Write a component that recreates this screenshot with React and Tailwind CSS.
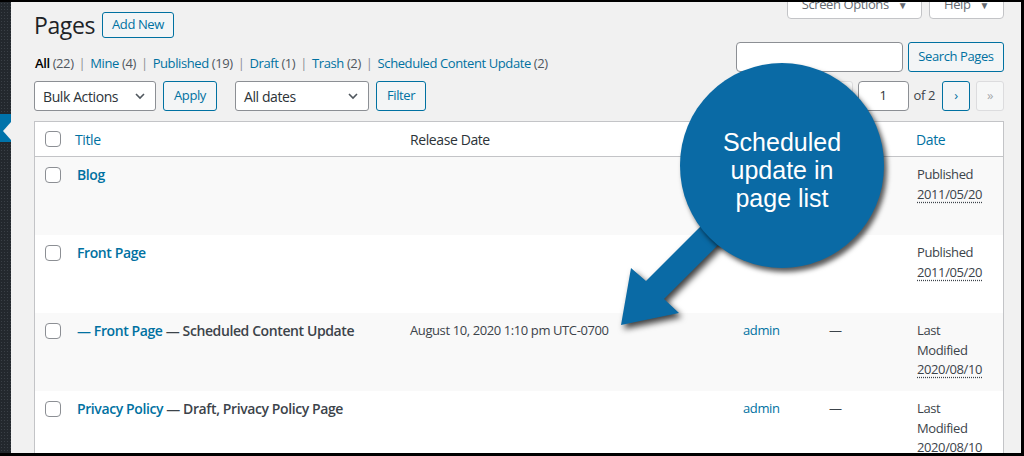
import React from "react";

function Chevron() {
  return (
    <svg width="16" height="16" viewBox="0 0 20 20" className="shrink-0">
      <path d="M5 7.5l5 5 5-5" fill="none" stroke="#50575e" strokeWidth="2" />
    </svg>
  );
}

function Checkbox() {
  return <div className="w-[16px] h-[16px] rounded-[4px] border border-[#8c8f94] bg-white shrink-0" />;
}

function Btn({ children, className = "" }) {
  return (
    <div className={"flex items-center justify-center border border-[#0071a1] rounded-[3px] bg-[#f3f5f6] text-[#0071a1] text-[13px] " + className}>
      {children}
    </div>
  );
}

function Select({ label, className = "" }) {
  return (
    <div className={"h-[30px] flex items-center justify-between border border-[#8c8f94] rounded-[3px] bg-white pl-[8px] pr-[7px] text-[14px] text-[#2c3338] " + className}>
      <span>{label}</span>
      <Chevron />
    </div>
  );
}

function Sep() {
  return <span className="text-[#8c8f94] px-[5px]">|</span>;
}

const rows = [
  {
    bg: "bg-[#f9f9f9]",
    title: <span className="text-[#0071a1]">Blog</span>,
    release: "",
    author: "",
    comments: "",
    date: ["Published"],
    dateVal: "2011/05/20",
  },
  {
    bg: "bg-white",
    title: <span className="text-[#0071a1]">Front Page</span>,
    release: "",
    author: "",
    comments: "",
    date: ["Published"],
    dateVal: "2011/05/20",
  },
  {
    bg: "bg-[#f9f9f9]",
    title: (
      <>
        <span className="text-[#0071a1]">— Front Page</span>
        <span className="text-[#3c434a]"> — Scheduled Content Update</span>
      </>
    ),
    release: "August 10, 2020 1:10 pm UTC-0700",
    author: "admin",
    comments: "—",
    date: ["Last", "Modified"],
    dateVal: "2020/08/10",
  },
  {
    bg: "bg-white",
    title: (
      <>
        <span className="text-[#0071a1]">Privacy Policy</span>
        <span className="text-[#3c434a]"> — Draft, Privacy Policy Page</span>
      </>
    ),
    release: "",
    author: "admin",
    comments: "—",
    date: ["Last", "Modified"],
    dateVal: "2020/08/10",
  },
];

const grid = "grid grid-cols-[40px_335px_333px_86px_87px_87px]";

export default function App() {
  return (
    <div className="relative w-[1024px] h-[456px] overflow-hidden bg-black pt-[2px] pr-[3px] pb-[3px] flex font-['Open_Sans',sans-serif] tracking-[-0.025em]">
      {/* admin sidebar strip */}
      <div className="w-[11px] h-full shrink-0 bg-[#23282d] bg-[radial-gradient(#3a4046_0.7px,transparent_0.8px)] bg-[length:3px_3px] flex flex-col">
        <div className="h-[112px]" />
        <div className="relative h-[28px] bg-[#0073aa]">
          <div className="absolute right-0 top-[8px] w-0 h-0 border-y-[9px] border-y-transparent border-r-[8px] border-r-[#f1f1f1]" />
        </div>
      </div>

      {/* main */}
      <div className="flex-1 h-full bg-[#f1f1f1] overflow-hidden pl-[23px] pr-[17px] flex flex-col">
        {/* header */}
        <div className="flex justify-between items-start">
          <div className="flex items-center gap-[7px] mt-[10px]">
            <h1 className="text-[23px] leading-[26px] font-normal text-[#1d2327]">Pages</h1>
            <Btn className="h-[26px] w-[72px]">Add New</Btn>
          </div>
          <div className="flex gap-[7px] mt-[-11px]">
            <div className="w-[135px] h-[28px] bg-white border border-[#c3c4c7] rounded-b-[4px] flex items-center justify-center gap-[9px] text-[13px] text-[#646970]">
              <span>Screen Options</span>
              <span className="text-[10px]">▼</span>
            </div>
            <div className="w-[75px] h-[28px] bg-white border border-[#c3c4c7] rounded-b-[4px] flex items-center justify-center gap-[9px] text-[13px] text-[#646970]">
              <span>Help</span>
              <span className="text-[10px]">▼</span>
            </div>
          </div>
        </div>

        {/* views + search */}
        <div className="flex justify-between items-start mt-[4px]">
          <div className="pt-[11px] pl-[1px] text-[13px] leading-[20px] text-[#50575e] flex">
            <span className="font-semibold text-black">All</span>
            <span>&nbsp;(22)</span>
            <Sep />
            <span className="text-[#0071a1]">Mine</span>
            <span>&nbsp;(4)</span>
            <Sep />
            <span className="text-[#0071a1]">Published</span>
            <span>&nbsp;(19)</span>
            <Sep />
            <span className="text-[#0071a1]">Draft</span>
            <span>&nbsp;(1)</span>
            <Sep />
            <span className="text-[#0071a1]">Trash</span>
            <span>&nbsp;(2)</span>
            <Sep />
            <span className="text-[#0071a1]">Scheduled Content Update</span>
            <span>&nbsp;(2)</span>
          </div>
          <div className="flex gap-[5px]">
            <div className="w-[167px] h-[30px] border border-[#8c8f94] rounded-[4px] bg-white" />
            <Btn className="w-[96px] h-[30px]">Search Pages</Btn>
          </div>
        </div>

        {/* tablenav */}
        <div className="flex justify-between items-center mt-[8px] h-[30px]">
          <div className="flex items-center">
            <Select label="Bulk Actions" className="w-[122px]" />
            <Btn className="w-[54px] h-[30px] ml-[7px]">Apply</Btn>
            <Select label="All dates" className="w-[134px] ml-[18px]" />
            <Btn className="w-[50px] h-[30px] ml-[7px]">Filter</Btn>
          </div>
          <div className="flex items-center text-[13px] text-[#50575e]">
            <span className="mr-[8px]">22 items</span>
            <div className="w-[28px] h-[30px] border border-[#dcdcde] rounded-[3px] bg-[#f6f7f7] text-[#a7aaad] flex items-center justify-center">«</div>
            <div className="w-[28px] h-[30px] ml-[4px] border border-[#dcdcde] rounded-[3px] bg-[#f6f7f7] text-[#a7aaad] flex items-center justify-center">‹</div>
            <div className="w-[51px] h-[30px] ml-[5px] border border-[#8c8f94] rounded-[4px] bg-white flex items-center justify-center text-[#2c3338]">1</div>
            <span className="ml-[5px] text-[#3c434a]">of 2</span>
            <Btn className="w-[28px] h-[30px] ml-[7px]">›</Btn>
            <div className="w-[28px] h-[30px] ml-[6px] border border-[#dcdcde] rounded-[3px] bg-[#f6f7f7] text-[#a7aaad] flex items-center justify-center">»</div>
          </div>
        </div>

        {/* table */}
        <div className="mt-[10px] border border-[#c3c4c7] bg-white shrink-0">
          <div className={grid + " h-[35px] items-center border-b border-[#c3c4c7] text-[14px]"}>
            <div className="pl-[10px]"><Checkbox /></div>
            <div className="text-[#0071a1]">Title</div>
            <div className="text-[#2c3338]">Release Date</div>
            <div className="text-[#0071a1]">Author</div>
            <div className="text-[#50575e]">
              <svg width="20" height="20" viewBox="0 0 20 20">
                <path d="M4 4h12v8H9l-3 3v-3H4z" fill="#8c8f94" />
              </svg>
            </div>
            <div className="text-[#0071a1]">Date</div>
          </div>
          {rows.map((r, i) => (
            <div key={i} className={grid + " h-[78px] items-start pt-[8px] text-[13px] leading-[19.5px] " + r.bg}>
              <div className="pl-[10px] pt-[2px]"><Checkbox /></div>
              <div className="pl-[2px] text-[14px] font-semibold">{r.title}</div>
              <div className="text-[#3c434a]">{r.release}</div>
              <div className="text-[#0071a1]">{r.author}</div>
              <div className="text-[#3c434a]">{r.comments}</div>
              <div className="pl-[1px] text-[#3c434a] flex flex-col">
                {r.date.map((d) => (
                  <span key={d}>{d}</span>
                ))}
                <span className="underline decoration-dotted underline-offset-[3px]">{r.dateVal}</span>
              </div>
            </div>
          ))}
        </div>
      </div>

      {/* callout arrow */}
      <svg
        className="absolute left-0 top-0 pointer-events-none drop-shadow-[3px_4px_3px_rgba(0,0,0,0.75)]"
        width="1024"
        height="456"
        viewBox="0 0 1024 456"
      >
        <polygon
          points="621,325 631,268 646,281 706,221 724,239 664,299 679,313"
          fill="#0a6aa5"
        />
      </svg>

      {/* callout bubble */}
      <div className="absolute left-[680px] top-[63px] w-[204px] h-[205px] rounded-full bg-[#0a6aa5] shadow-[3px_4px_5px_rgba(0,0,0,0.65)] flex flex-col items-center pt-[65px] font-['Liberation_Sans',Arial,sans-serif] tracking-normal text-white text-[25px] leading-[28px]">
        <span>Scheduled</span>
        <span>update in</span>
        <span>page list</span>
      </div>
    </div>
  );
}
